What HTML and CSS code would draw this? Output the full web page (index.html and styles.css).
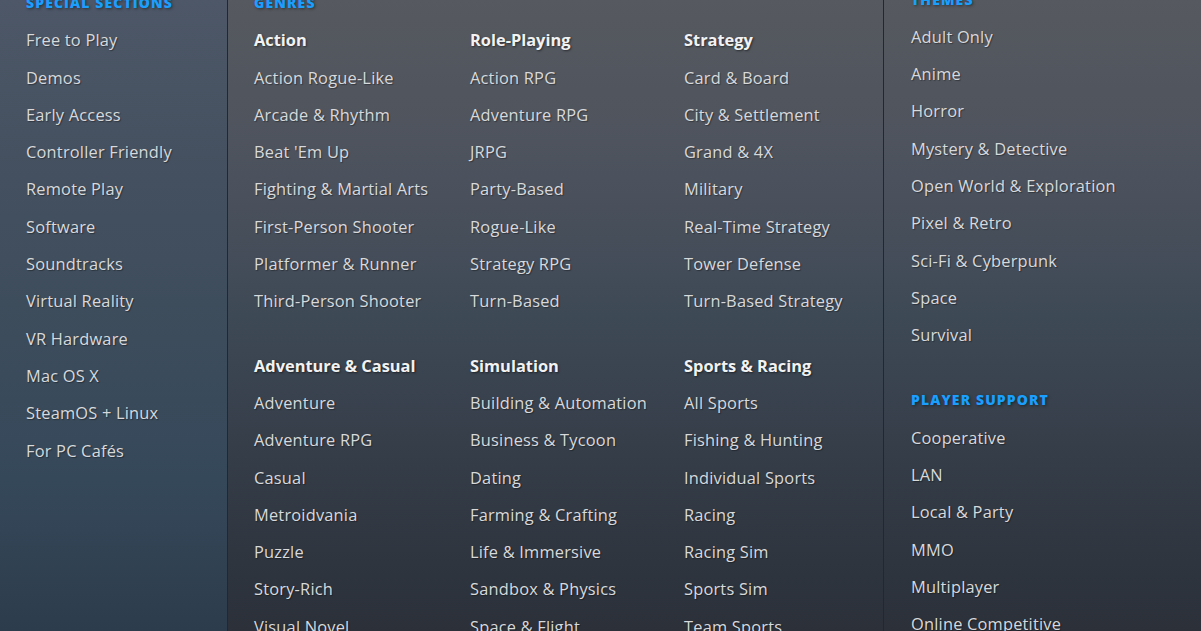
FILE: index.html
```html
<!DOCTYPE html>
<html lang="en">
<head>
<meta charset="utf-8">
<title>Store Categories</title>
<link rel="stylesheet" href="styles.css">
</head>
<body>
<div class="menu">
  <div class="col col-special">
    <div class="section-title">Special Sections</div>
    <a class="item">Free to Play</a>
    <a class="item">Demos</a>
    <a class="item">Early Access</a>
    <a class="item">Controller Friendly</a>
    <a class="item">Remote Play</a>
    <a class="item">Software</a>
    <a class="item">Soundtracks</a>
    <a class="item">Virtual Reality</a>
    <a class="item">VR Hardware</a>
    <a class="item">Mac OS X</a>
    <a class="item">SteamOS + Linux</a>
    <a class="item">For PC Cafés</a>
  </div>
  <div class="col col-genres">
    <div class="section-title">Genres</div>
    <div class="genre-grid">
      <div class="group">
        <div class="group-title">Action</div>
        <a class="item">Action Rogue-Like</a>
        <a class="item">Arcade &amp; Rhythm</a>
        <a class="item">Beat 'Em Up</a>
        <a class="item">Fighting &amp; Martial Arts</a>
        <a class="item">First-Person Shooter</a>
        <a class="item">Platformer &amp; Runner</a>
        <a class="item">Third-Person Shooter</a>
      </div>
      <div class="group">
        <div class="group-title">Role-Playing</div>
        <a class="item">Action RPG</a>
        <a class="item">Adventure RPG</a>
        <a class="item">JRPG</a>
        <a class="item">Party-Based</a>
        <a class="item">Rogue-Like</a>
        <a class="item">Strategy RPG</a>
        <a class="item">Turn-Based</a>
      </div>
      <div class="group">
        <div class="group-title">Strategy</div>
        <a class="item">Card &amp; Board</a>
        <a class="item">City &amp; Settlement</a>
        <a class="item">Grand &amp; 4X</a>
        <a class="item">Military</a>
        <a class="item">Real-Time Strategy</a>
        <a class="item">Tower Defense</a>
        <a class="item">Turn-Based Strategy</a>
      </div>
      <div class="group">
        <div class="group-title">Adventure &amp; Casual</div>
        <a class="item">Adventure</a>
        <a class="item">Adventure RPG</a>
        <a class="item">Casual</a>
        <a class="item">Metroidvania</a>
        <a class="item">Puzzle</a>
        <a class="item">Story-Rich</a>
        <a class="item">Visual Novel</a>
      </div>
      <div class="group">
        <div class="group-title">Simulation</div>
        <a class="item">Building &amp; Automation</a>
        <a class="item">Business &amp; Tycoon</a>
        <a class="item">Dating</a>
        <a class="item">Farming &amp; Crafting</a>
        <a class="item">Life &amp; Immersive</a>
        <a class="item">Sandbox &amp; Physics</a>
        <a class="item">Space &amp; Flight</a>
      </div>
      <div class="group">
        <div class="group-title">Sports &amp; Racing</div>
        <a class="item">All Sports</a>
        <a class="item">Fishing &amp; Hunting</a>
        <a class="item">Individual Sports</a>
        <a class="item">Racing</a>
        <a class="item">Racing Sim</a>
        <a class="item">Sports Sim</a>
        <a class="item">Team Sports</a>
      </div>
    </div>
  </div>
  <div class="col col-themes">
    <div class="section-title">Themes</div>
    <a class="item">Adult Only</a>
    <a class="item">Anime</a>
    <a class="item">Horror</a>
    <a class="item">Mystery &amp; Detective</a>
    <a class="item">Open World &amp; Exploration</a>
    <a class="item">Pixel &amp; Retro</a>
    <a class="item">Sci-Fi &amp; Cyberpunk</a>
    <a class="item">Space</a>
    <a class="item">Survival</a>
    <div class="section-title section-gap">Player Support</div>
    <a class="item">Cooperative</a>
    <a class="item">LAN</a>
    <a class="item">Local &amp; Party</a>
    <a class="item">MMO</a>
    <a class="item">Multiplayer</a>
    <a class="item">Online Competitive</a>
  </div>
</div>
</body>
</html>
```
FILE: styles.css
```css
html, body {
  margin: 0;
  padding: 0;
  height: 631px;
  overflow: hidden;
}

body {
  font-family: "Open Sans", "Noto Sans", sans-serif;
  font-size: 16.4px;
  letter-spacing: 0.2px;
  color: #d8d9db;
  background: linear-gradient(180deg, #56595f 0%, #4c525d 28%, #3e4956 50%, #343c47 74%, #2b3039 100%);
}

.menu {
  display: flex;
  height: 631px;
}

.col {
  display: flex;
  flex-direction: column;
}

.col-special {
  width: 201px;
  padding-left: 26px;
  border-right: 1px solid #23272e;
  background: linear-gradient(180deg, #4d5767 0%, #44505f 28%, #3e4d5c 48%, #35485a 76%, #2d3c4c 100%);
}

.col-special > .section-title,
.col-genres > .section-title {
  margin-top: -16px;
}

.col-genres {
  width: 629px;
  padding-left: 26px;
  border-right: 1px solid #23272e;
}

.col-themes {
  flex: 1;
  padding-left: 27px;
}

.col-themes > .section-title:first-child {
  margin-top: -19.5px;
}

.section-title {
  line-height: 37.3px;
  font-size: 14px;
  font-weight: 800;
  letter-spacing: 1.1px;
  text-transform: uppercase;
  color: #1a9fff;
  text-shadow: 1px 1px 3px rgba(0, 0, 0, 0.45);
}

.section-gap {
  margin-top: 28px;
}

.genre-grid {
  display: grid;
  grid-template-columns: 216px 214px 1fr;
  row-gap: 27px;
}

.group {
  display: flex;
  flex-direction: column;
}

.group-title {
  line-height: 37.3px;
  font-weight: 700;
  letter-spacing: 0;
  color: #f2f2f2;
  text-shadow: 1px 1px 2px rgba(0, 0, 0, 0.5);
}

.item {
  display: block;
  line-height: 37.3px;
  white-space: nowrap;
  color: #d8d9db;
  text-shadow: 1px 1px 1px rgba(0, 0, 0, 0.35);
  text-decoration: none;
}
```
